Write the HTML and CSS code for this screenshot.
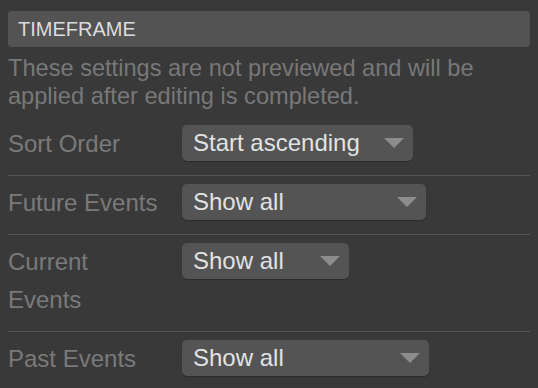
FILE: index.html
```html
<!DOCTYPE html>
<html lang="en">
<head>
    <meta charset="UTF-8">
    <meta name="viewport" content="width=device-width, initial-scale=1.0">
    <title>Timeframe</title>
    <link rel="stylesheet" href="styles.css">
</head>
<body>
    <div class="panel">
        <!-- section header -->
        <div class="section-title">TIMEFRAME</div>
        <p class="section-note">These settings are not previewed and will be applied after editing is completed.</p>

        <div class="setting-row">
            <div class="setting-label">Sort Order</div>
            <div class="select select-sort">
                <span>Start ascending</span>
                <span class="select-arrow"></span>
            </div>
        </div>

        <div class="setting-row">
            <div class="setting-label">Future Events</div>
            <div class="select select-future">
                <span>Show all</span>
                <span class="select-arrow"></span>
            </div>
        </div>

        <div class="setting-row">
            <div class="setting-label">Current<br>Events</div>
            <div class="select select-current">
                <span>Show all</span>
                <span class="select-arrow"></span>
            </div>
        </div>

        <div class="setting-row last">
            <div class="setting-label">Past Events</div>
            <div class="select select-past">
                <span>Show all</span>
                <span class="select-arrow"></span>
            </div>
        </div>
    </div>
</body>
</html>
```

FILE: styles.css
```css
body {
    margin: 0;
    background-color: #393939;
    font-family: "Liberation Sans", Arial, sans-serif;
    overflow: hidden;
}

.panel {
    padding: 11px 8px 0 8px;
}

.section-title {
    height: 36px;
    line-height: 36px;
    padding-left: 10px;
    background-color: #535353;
    border-radius: 4px;
    color: #dcdcdc;
    font-size: 20px;
}

.section-note {
    margin: 7px 0 7px 0;
    font-size: 23.6px;
    line-height: 28px;
    color: #787878;
}

.setting-row {
    display: flex;
    align-items: flex-start;
    padding: 8px 0 12px 0;
    border-bottom: 1px solid #555555;
}

.setting-row.last {
    border-bottom: none;
}

.setting-label {
    width: 150px;
    flex-shrink: 0;
    margin-right: 24px;
    font-size: 24px;
    line-height: 38px;
    color: #7a7a7a;
}

.select {
    display: flex;
    align-items: center;
    justify-content: space-between;
    height: 36px;
    padding: 0 9px 0 11px;
    box-sizing: border-box;
    background-color: #545454;
    border-radius: 5px;
    box-shadow: 0 1px 1px rgba(0, 0, 0, 0.25);
    color: #e2e2e2;
    font-size: 24px;
}

.select-sort { width: 231px; }
.select-future { width: 244px; }
.select-current { width: 167px; }
.select-past { width: 247px; }

.select-arrow {
    width: 0;
    height: 0;
    border-left: 10px solid transparent;
    border-right: 10px solid transparent;
    border-top: 10px solid #8c8c8c;
}
```
